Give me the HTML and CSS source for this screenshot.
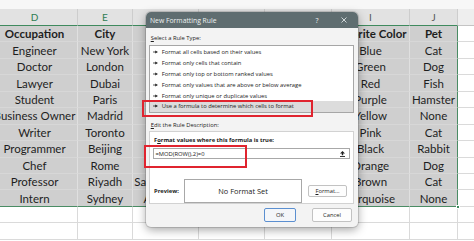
FILE: index.html
```html
<!DOCTYPE html>
<html>
<head>
<meta charset="utf-8">
<title>New Formatting Rule</title>
<link rel="stylesheet" href="styles.css">
</head>
<body>
<div class="sheet">
  <div class="strip"></div>
  <div class="h sel g">D</div><div class="h sel g">E</div><div class="h sel"></div><div class="h sel"></div><div class="h sel"></div><div class="h sel">I</div><div class="h sel">J</div><div class="h"></div>

  <div class="c s bold">Occupation</div><div class="c s bold">City</div><div class="c s"></div><div class="c s"></div><div class="c s"></div><div class="c s bold">Favorite Color</div><div class="c s r bold">Pet</div><div class="c"></div>
  <div class="c s">Engineer</div><div class="c s">New York</div><div class="c s"></div><div class="c s"></div><div class="c s"></div><div class="c s">Blue</div><div class="c s r">Cat</div><div class="c"></div>
  <div class="c s">Doctor</div><div class="c s">London</div><div class="c s"></div><div class="c s"></div><div class="c s"></div><div class="c s">Green</div><div class="c s r">Dog</div><div class="c"></div>
  <div class="c s">Lawyer</div><div class="c s">Dubai</div><div class="c s"></div><div class="c s"></div><div class="c s"></div><div class="c s">Red</div><div class="c s r">Fish</div><div class="c"></div>
  <div class="c s">Student</div><div class="c s">Paris</div><div class="c s"></div><div class="c s"></div><div class="c s"></div><div class="c s">Purple</div><div class="c s r">Hamster</div><div class="c"></div>
  <div class="c s">Business Owner</div><div class="c s">Madrid</div><div class="c s"></div><div class="c s"></div><div class="c s"></div><div class="c s">Yellow</div><div class="c s r">None</div><div class="c"></div>
  <div class="c s">Writer</div><div class="c s">Toronto</div><div class="c s"></div><div class="c s"></div><div class="c s"></div><div class="c s">Pink</div><div class="c s r">Cat</div><div class="c"></div>
  <div class="c s">Programmer</div><div class="c s">Beijing</div><div class="c s"></div><div class="c s"></div><div class="c s"></div><div class="c s">Black</div><div class="c s r">Rabbit</div><div class="c"></div>
  <div class="c s">Chef</div><div class="c s">Rome</div><div class="c s"></div><div class="c s"></div><div class="c s"></div><div class="c s">Orange</div><div class="c s r">Dog</div><div class="c"></div>
  <div class="c s">Professor</div><div class="c s">Riyadh</div><div class="c s">Saudi Arabia</div><div class="c s"></div><div class="c s"></div><div class="c s">Brown</div><div class="c s r">Cat</div><div class="c"></div>
  <div class="c s b">Intern</div><div class="c s b">Sydney</div><div class="c s b">Australia</div><div class="c s b"></div><div class="c s b"></div><div class="c s b">Turquoise</div><div class="c s r b">None</div><div class="c"></div>

  <div class="c"></div><div class="c"></div><div class="c"></div><div class="c"></div><div class="c"></div><div class="c"></div><div class="c"></div><div class="c"></div>
  <div class="c"></div><div class="c"></div><div class="c"></div><div class="c"></div><div class="c"></div><div class="c"></div><div class="c"></div><div class="c"></div>
</div>
<div class="handle"></div>

<div class="dialog">
  <div class="titlebar">
    <span class="title">New Formatting Rule</span>
    <span class="help">?</span>
    <span class="close"><svg width="6" height="6" viewBox="0 0 6 6"><path d="M0.5 0.5 L5.5 5.5 M5.5 0.5 L0.5 5.5" stroke="#eef2f2" stroke-width="0.8" fill="none"/></svg></span>
  </div>
  <div class="body">
    <div class="label"><u>S</u>elect a Rule Type:</div>
    <ul class="types">
      <li><svg class="arr" viewBox="0 0 6 4"><path d="M0 2 H3" stroke="#222" stroke-width="0.9"/><polygon points="2.6,0.3 6,2 2.6,3.7" fill="#222"/></svg>Format all cells based on their values</li>
      <li><svg class="arr" viewBox="0 0 6 4"><path d="M0 2 H3" stroke="#222" stroke-width="0.9"/><polygon points="2.6,0.3 6,2 2.6,3.7" fill="#222"/></svg>Format only cells that contain</li>
      <li><svg class="arr" viewBox="0 0 6 4"><path d="M0 2 H3" stroke="#222" stroke-width="0.9"/><polygon points="2.6,0.3 6,2 2.6,3.7" fill="#222"/></svg>Format only top or bottom ranked values</li>
      <li><svg class="arr" viewBox="0 0 6 4"><path d="M0 2 H3" stroke="#222" stroke-width="0.9"/><polygon points="2.6,0.3 6,2 2.6,3.7" fill="#222"/></svg>Format only values that are above or below average</li>
      <li><svg class="arr" viewBox="0 0 6 4"><path d="M0 2 H3" stroke="#222" stroke-width="0.9"/><polygon points="2.6,0.3 6,2 2.6,3.7" fill="#222"/></svg>Format only unique or duplicate values</li>
      <li class="active"><svg class="arr" viewBox="0 0 6 4"><path d="M0 2 H3" stroke="#222" stroke-width="0.9"/><polygon points="2.6,0.3 6,2 2.6,3.7" fill="#222"/></svg>Use a formula to determine which cells to format</li>
    </ul>
    <div class="label2"><u>E</u>dit the Rule Description:</div>
    <div class="panel">
      <div class="plabel">F<u>o</u>rmat values where this formula is true:</div>
      <div class="input">
        <span class="formula">=MOD(ROW(),2)=0</span>
        <span class="collapse"><svg width="5" height="6" viewBox="0 0 5 6"><polygon points="2.5,0 5,2.6 3.2,2.6 3.2,4.2 1.8,4.2 1.8,2.6 0,2.6" fill="#222"/><rect x="0" y="5" width="5" height="0.9" fill="#222"/></svg></span>
      </div>
      <div class="prow">
        <span class="plab">Preview:</span>
        <div class="pbox">No Format Set</div>
        <div class="btn fmt"><u>F</u>ormat...</div>
      </div>
    </div>
    <div class="footer">
      <div class="btn ok">OK</div>
      <div class="btn cancel">Cancel</div>
    </div>
  </div>
  <div class="mark mark1"></div>
  <div class="mark mark2"></div>
</div>
</body>
</html>
```
FILE: styles.css
```css
* { box-sizing: border-box; }
html, body { margin: 0; padding: 0; }
body {
  width: 474px;
  height: 241px;
  overflow: hidden;
  background: #ffffff;
  position: relative;
  font-family: Lato, "Noto Sans", sans-serif;
}

.sheet {
  display: grid;
  grid-template-columns: 86px 55px 66px 66px 67px 78px 48px 40px;
  grid-template-rows: 9px 17px repeat(13, 16.45px);
  margin-left: -8px;
}
.strip { grid-column: 1 / -1; background: #f7f7f7; }

.h {
  background: #eeeeee;
  border-right: 1px solid #cdcdcd;
  border-bottom: 1px solid #c4c4c4;
  display: flex;
  align-items: center;
  justify-content: center;
  font-size: 10px;
  color: #555555;
}
.h.sel { background: #e2e2e2; border-bottom-color: #3f8a5e; }
.h.g { color: #2f7d52; }

.c {
  border-right: 1px solid #dadada;
  border-bottom: 1px solid #dadada;
  display: flex;
  align-items: center;
  justify-content: center;
  white-space: nowrap;
  font-size: 11.5px;
  color: #1e1e1e;
}
.c.s { background: #cfcfcf; border-right-color: #e0e0e0; border-bottom-color: #d7d7d7; }
.c.r { border-right-color: #4a8c64; }
.c.b { border-bottom-color: #4a8c64; }
.bold { font-weight: 700; }

.handle {
  position: absolute;
  left: 456px;
  top: 205px;
  width: 4px;
  height: 4px;
  background: #3f8a5e;
  border: 1px solid #ffffff;
}

.dialog {
  position: absolute;
  left: 146px;
  top: 12px;
  width: 212px;
  height: 215px;
  background: #f3f3f3;
  border-radius: 5px;
  box-shadow: 0 3px 10px rgba(0,0,0,.35), 0 0 0 1px rgba(0,0,0,.12);
  font-family: "Open Sans", "Noto Sans", sans-serif;
  color: #1b1b1b;
  display: flex;
  flex-direction: column;
}
.titlebar {
  height: 16px;
  background: #5f6d70;
  border-radius: 5px 5px 0 0;
  display: flex;
  align-items: center;
  padding: 0 9px 0 4px;
  color: #eef2f2;
}
.title { flex: 1; font-size: 6.8px; }
.help { width: 10px; text-align: center; font-size: 7px; margin-right: 17px; }
.close { width: 10px; height: 10px; display: flex; align-items: center; justify-content: center; }

.body {
  flex: 1;
  display: flex;
  flex-direction: column;
  padding: 0 4px 0 3px;
}
.label { margin-top: 6px; line-height: 9px; font-size: 5.8px; padding-left: 1.7px; }
.types {
  list-style: none;
  margin: 2px 0 0;
  padding: 1px 0 0;
  height: 67.8px;
  background: #ffffff;
  border: 1px solid #a6a6a6;
}
.types li {
  height: 10.8px;
  display: flex;
  align-items: center;
  font-size: 5.8px;
  padding-left: 3px;
  white-space: nowrap;
}
.types li.active { background: #dcdcdc; }
.arr { width: 5px; height: 4px; margin-right: 3.7px; flex: none; }

.label2 { margin-top: 8.5px; line-height: 9px; font-size: 5.8px; padding-left: 1.7px; }
.panel {
  margin-top: 0.5px;
  height: 73px;
  background: #ffffff;
  border: 1px solid #d2d2d2;
  padding: 4.3px 3px 0 3px;
  display: flex;
  flex-direction: column;
}
.plabel { font-weight: 700; font-size: 5.8px; line-height: 9px; padding-left: 1px; }
.input {
  margin-top: 2.7px;
  height: 11.5px;
  border: 1px solid #a8a8a8;
  display: flex;
  align-items: center;
  padding-left: 1.5px;
  font-size: 5.8px;
}
.formula { flex: 1; }
.collapse { width: 11px; height: 100%; display: flex; align-items: center; justify-content: center; margin-right: 1px; }

.prow { margin-top: 19.5px; display: flex; align-items: center; }
.plab { width: 31px; font-weight: 700; font-size: 5.8px; padding-left: 1px; }
.pbox {
  width: 118px;
  height: 24px;
  border: 1px solid #a8a8a8;
  display: flex;
  align-items: center;
  justify-content: center;
  font-size: 7.4px;
  color: #222222;
}
.btn {
  display: flex;
  align-items: center;
  justify-content: center;
  font-size: 5.8px;
  background: #fdfdfd;
  border: 1px solid #c2c2c2;
  border-radius: 2px;
}
.fmt { width: 39px; height: 12.5px; margin-left: 6px; }

.footer {
  margin-top: 4.2px;
  display: flex;
  justify-content: flex-end;
  gap: 16px;
  padding-right: 2px;
}
.ok { width: 32px; height: 14px; background: #f4f6f9; border-color: #5b8fd0; }
.cancel { width: 40px; height: 14px; }

.mark {
  position: absolute;
  border: 2px solid #e0242f;
}
.mark1 { left: -4px; top: 88px; width: 171px; height: 17px; }
.mark2 { left: -2px; top: 133px; width: 103px; height: 23px; }
```
